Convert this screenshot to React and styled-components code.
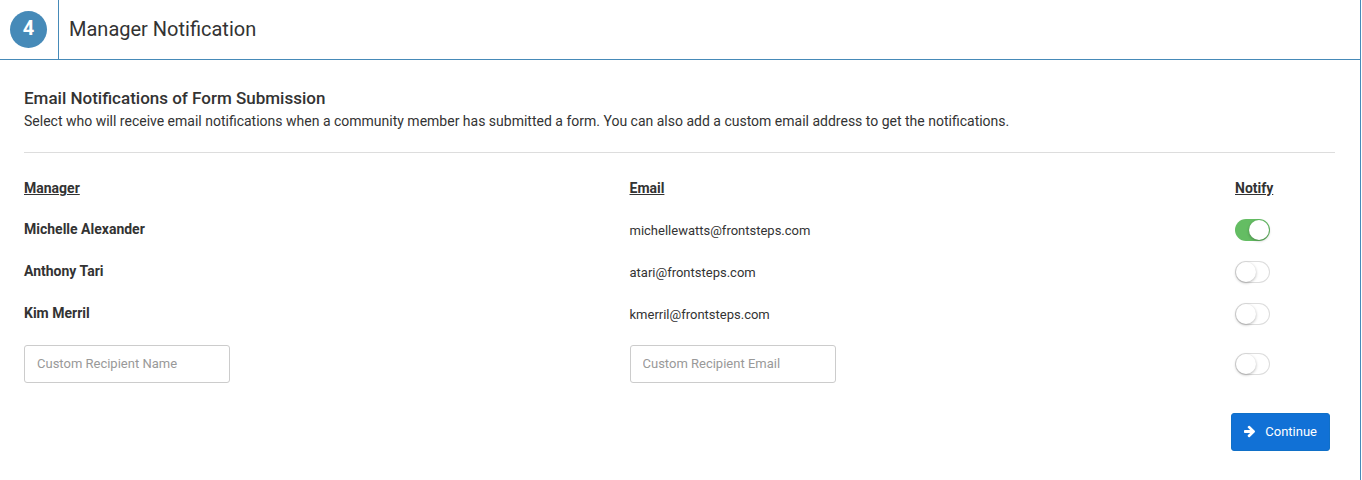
import React, {useState} from 'react';
import styled, {createGlobalStyle} from 'styled-components';

const GlobalStyle = createGlobalStyle`
    * {
        box-sizing: border-box;
    }
    body {
        margin: 0;
        background: white;
        color: #333;
        font-family: Roboto, sans-serif;
        font-size: 14px;
        line-height: 20px;
    }
`;

const Panel = styled.section`
    min-height: 100vh;
    margin-right: 1px;
    border-right: 1px solid #468ab8;
`;

const StepHeader = styled.header`
    display: flex;
    height: 60px;
    border-bottom: 1px solid #468ab8;
`;

const StepCell = styled.div`
    width: 59px;
    padding: 11px 10px;
    border-right: 1px solid #468ab8;
`;

const StepNumber = styled.div`
    width: 37px;
    height: 37px;
    border-radius: 50%;
    background: #468ab8;
    color: white;
    font-size: 20px;
    font-weight: bold;
    line-height: 34px;
    text-align: center;
`;

const StepTitle = styled.h2`
    margin: 0;
    padding-left: 10px;
    font-size: 20px;
    font-weight: 400;
    line-height: 58px;
`;

const Content = styled.div`
    padding: 28px 25px 29px 24px;
`;

const Heading = styled.h3`
    margin: 0 0 2px;
    font-size: 17px;
    font-weight: 500;
    line-height: 20px;
`;

const Intro = styled.p`
    margin: 0;
    padding-bottom: 20px;
    border-bottom: 1px solid #ddd;
    line-height: 22px;
`;

const Table = styled.table`
    width: 100%;
    margin-top: 14px;
    border-collapse: collapse;
    table-layout: fixed;
`;

const ColumnTitle = styled.th`
    width: ${(props=> props.$narrow ? '100px' : 'auto')};
    height: 42px;
    padding: 0;
    text-align: left;
    text-decoration: underline;
`;

const Cell = styled.td`
    height: 42px;
    padding: 0;
`;

const NameCell = styled.th`
    height: 42px;
    padding: 0 0 2px;
    text-align: left;
`;

const EmailCell = styled(Cell)`
    padding-top: 2px;
    font-size: 13px;
`;

const CustomCell = styled(Cell)`
    height: 58px;
`;

const TextInput = styled.input`
    display: block;
    width: 206px;
    height: 38px;
    padding: 0 12px 2px;
    border: 1px solid #ccc;
    border-radius: 3px;
    background: white;
    color: #333;
    font-family: Roboto, sans-serif;
    font-size: 13px;
    &::placeholder {
        color: #999;
        opacity: 1;
    }
`;

const Switch = styled.input`
    appearance: none;
    display: block;
    width: 35px;
    height: 22px;
    margin: 0;
    padding: 1px;
    border: 0;
    border-radius: 11px;
    background: white;
    box-shadow: inset 0 0 0 1px #ddd;
    cursor: pointer;
    &::before {
        content: '';
        display: block;
        width: 20px;
        height: 20px;
        border-radius: 50%;
        background: white;
        box-shadow: 0 1px 3px rgba(0, 0, 0, .3);
    }
    &:checked {
        background: #64bd63;
        box-shadow: none;
    }
    &:checked::before {
        margin-left: 13px;
    }
`;

const Actions = styled.div`
    display: flex;
    justify-content: flex-end;
    padding: 20px 5px 0 0;
`;

const ContinueButton = styled.button`
    display: flex;
    align-items: center;
    gap: 10px;
    height: 38px;
    padding: 0 12px 2px;
    border: 1px solid #1070c8;
    border-radius: 3px;
    background: #1171d6;
    color: white;
    font-family: Roboto, sans-serif;
    font-size: 13px;
    cursor: pointer;
`;

const managers = [
    {name: 'Michelle Alexander', email: 'michellewatts@frontsteps.com', notify: true},
    {name: 'Anthony Tari', email: 'atari@frontsteps.com', notify: false},
    {name: 'Kim Merril', email: 'kmerril@frontsteps.com', notify: false},
]

function ArrowIcon() {
    return (
        <svg width="11" height="13" viewBox="0 128 1472 1664" fill="currentColor" aria-hidden="true">
            <path d="M1472 960q0 54-37 91l-651 651q-39 37-91 37-51 0-90-37l-75-75q-38-38-38-91t38-91l293-293H117q-52 0-84.500-37.500T0 1024V896q0-53 32.500-90.500T117 768h704L528 474q-38-36-38-90t38-90l75-75q38-38 90-38 53 0 91 38l651 651q37 35 37 90z"/>
        </svg>
    )
}

function ManagerRow({manager}) {

    const [notify, setNotify] = useState(manager.notify);

    return (
        <tr>
            <NameCell scope="row">{manager.name}</NameCell>
            <EmailCell>{manager.email}</EmailCell>
            <Cell>
                <Switch type="checkbox" role="switch" aria-label={'Notify ' + manager.name} checked={notify} onChange={()=>setNotify(!notify)}/>
            </Cell>
        </tr>
    )
}

export default function App() {

    const [name, setName] = useState('');
    const [email, setEmail] = useState('');
    const [notifyCustom, setNotifyCustom] = useState(false);

    return (
        <Panel>
            <GlobalStyle/>
            <StepHeader>
                <StepCell><StepNumber>4</StepNumber></StepCell>
                <StepTitle>Manager Notification</StepTitle>
            </StepHeader>
            <Content>
                <Heading>Email Notifications of Form Submission</Heading>
                <Intro>Select who will receive email notifications when a community member has submitted a form. You can also add a custom email address to get the notifications.</Intro>
                <Table>
                    <thead>
                        <tr>
                            <ColumnTitle scope="col">Manager</ColumnTitle>
                            <ColumnTitle scope="col">Email</ColumnTitle>
                            <ColumnTitle scope="col" $narrow>Notify</ColumnTitle>
                        </tr>
                    </thead>
                    <tbody>
                        {managers.map(manager=> <ManagerRow key={manager.email} manager={manager}/>)}
                        <tr>
                            <CustomCell>
                                <TextInput type="text" aria-label="Custom Recipient Name" placeholder="Custom Recipient Name" value={name} onChange={event=>setName(event.target.value)}/>
                            </CustomCell>
                            <CustomCell>
                                <TextInput type="email" aria-label="Custom Recipient Email" placeholder="Custom Recipient Email" value={email} onChange={event=>setEmail(event.target.value)}/>
                            </CustomCell>
                            <CustomCell>
                                <Switch type="checkbox" role="switch" aria-label="Notify custom recipient" checked={notifyCustom} onChange={()=>setNotifyCustom(!notifyCustom)}/>
                            </CustomCell>
                        </tr>
                    </tbody>
                </Table>
                <Actions>
                    <ContinueButton type="button"><ArrowIcon/>Continue</ContinueButton>
                </Actions>
            </Content>
        </Panel>
    )
}
